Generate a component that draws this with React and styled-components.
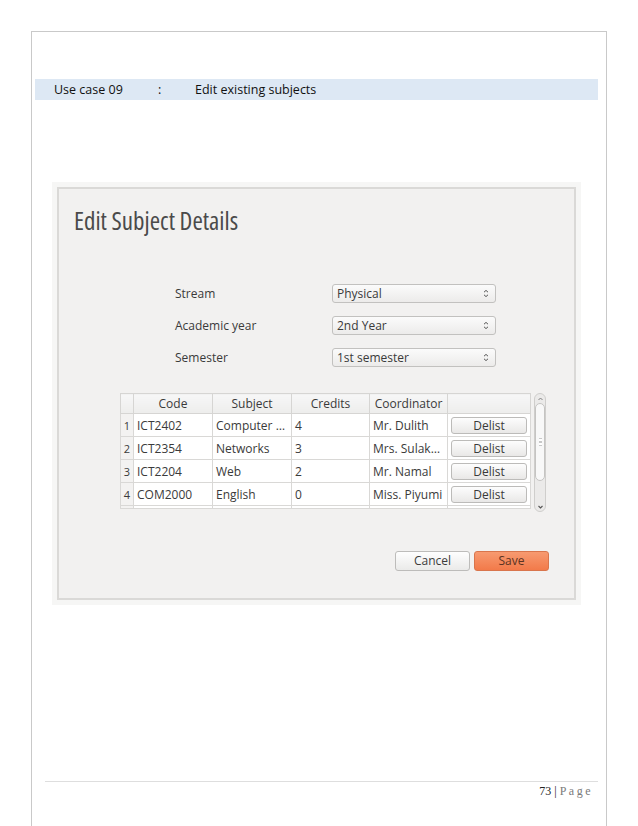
import styled, { createGlobalStyle } from "styled-components";

const GlobalStyle = createGlobalStyle`
  html, body {
    margin: 0;
    padding: 0;
    background: #ffffff;
  }
  body {
    font-family: "Open Sans", "Noto Sans", sans-serif;
  }
`;

const subjects = [
  { no: 1, code: "ICT2402", subject: "Computer Architecture", credits: 4, coordinator: "Mr. Dulith" },
  { no: 2, code: "ICT2354", subject: "Networks", credits: 3, coordinator: "Mrs. Sulakkana" },
  { no: 3, code: "ICT2204", subject: "Web", credits: 2, coordinator: "Mr. Namal" },
  { no: 4, code: "COM2000", subject: "English", credits: 0, coordinator: "Miss. Piyumi" },
];

const fields = [
  { label: "Stream", value: "Physical" },
  { label: "Academic year", value: "2nd Year" },
  { label: "Semester", value: "1st semester" },
];

function Arrows() {
  return (
    <svg width="6" height="9" viewBox="0 0 6 9">
      <path d="M1 3.2 L3 1.4 L5 3.2" fill="none" stroke="#555" strokeWidth="1" />
      <path d="M1 5.8 L3 7.6 L5 5.8" fill="none" stroke="#555" strokeWidth="1" />
    </svg>
  );
}

function App() {
  return (
    <>
      <GlobalStyle />
      <Page>
        <UseCaseBar>
          <UseCaseId>Use case 09</UseCaseId>
          <UseCaseColon>:</UseCaseColon>
          <span>Edit existing subjects</span>
        </UseCaseBar>

        <ShotFrame>
          <Dialog>
            <Title>Edit Subject Details</Title>

            <Form>
              {fields.map((f) => (
                <FormRow key={f.label}>
                  <Label>{f.label}</Label>
                  <Combo>
                    <span>{f.value}</span>
                    <Arrows />
                  </Combo>
                </FormRow>
              ))}
            </Form>

            <TableWrap>
              <Table>
                <colgroup>
                  <col style={{ width: 13 }} />
                  <col style={{ width: 79 }} />
                  <col style={{ width: 79 }} />
                  <col style={{ width: 78 }} />
                  <col style={{ width: 78 }} />
                  <col style={{ width: 83 }} />
                </colgroup>
                <thead>
                  <tr>
                    <HeadCell />
                    <HeadCell>Code</HeadCell>
                    <HeadCell>Subject</HeadCell>
                    <HeadCell>Credits</HeadCell>
                    <HeadCell>Coordinator</HeadCell>
                    <HeadCell />
                  </tr>
                </thead>
                <tbody>
                  {subjects.map((s) => (
                    <tr key={s.no}>
                      <RowNo>{s.no}</RowNo>
                      <Cell>{s.code}</Cell>
                      <Cell>{s.subject}</Cell>
                      <Cell>{s.credits}</Cell>
                      <Cell>{s.coordinator}</Cell>
                      <ButtonCell>
                        <DelistButton>Delist</DelistButton>
                      </ButtonCell>
                    </tr>
                  ))}
                  <PartialRow>
                    <RowNo />
                    <Cell />
                    <Cell />
                    <Cell />
                    <Cell />
                    <Cell />
                  </PartialRow>
                </tbody>
              </Table>
              <ScrollBar>
                <ScrollArrow>
                  <svg width="5" height="4" viewBox="0 0 5 4">
                    <path d="M0.5 3 L2.5 1 L4.5 3" fill="none" stroke="#777" strokeWidth="0.9" />
                  </svg>
                </ScrollArrow>
                <Thumb>
                  <Grip />
                </Thumb>
                <Track />
                <ScrollArrow>
                  <svg width="5" height="4" viewBox="0 0 5 4">
                    <path d="M0.5 1 L2.5 3 L4.5 1" fill="none" stroke="#555" strokeWidth="1.1" />
                  </svg>
                </ScrollArrow>
              </ScrollBar>
            </TableWrap>

            <Actions>
              <ActionButton>Cancel</ActionButton>
              <ActionButton $primary>Save</ActionButton>
            </Actions>
          </Dialog>
        </ShotFrame>

        <Footer>
          <PageNo>
            73 | <PageWord>Page</PageWord>
          </PageNo>
        </Footer>
      </Page>
    </>
  );
}

export default App;

const Page = styled.div`
  box-sizing: border-box;
  margin: 31px 0 0 31px;
  width: 576px;
  height: 795px;
  border: 1px solid #c9c9c9;
  border-bottom: none;
  padding-top: 47px;
  display: flex;
  flex-direction: column;
`;

const UseCaseBar = styled.div`
  margin-left: 3px;
  width: 563px;
  height: 21px;
  background: #dde8f4;
  display: flex;
  align-items: center;
  padding-left: 19px;
  box-sizing: border-box;
  font-size: 12.5px;
  color: #111;
`;

const UseCaseId = styled.span`
  width: 104px;
`;

const UseCaseColon = styled.span`
  width: 37px;
`;

const ShotFrame = styled.div`
  margin: 82px 0 0 20px;
  width: 529px;
  height: 423px;
  box-sizing: border-box;
  padding: 5px;
  background: #f6f6f5;
`;

const Dialog = styled.div`
  box-sizing: border-box;
  height: 100%;
  border: 2px solid #dad9d7;
  background: #f2f1f0;
  padding: 16px 0 0 15px;
  font-family: "Open Sans", "Noto Sans", sans-serif;
  color: #3c3c3c;
  display: flex;
  flex-direction: column;
`;

const Title = styled.h1`
  margin: 0;
  font-family: "Open Sans", "DejaVu Sans Condensed", sans-serif;
  font-stretch: 84%;
  font-weight: 500;
  font-size: 25px;
  line-height: 31px;
  color: #4a4a4a;
`;

const Form = styled.div`
  margin: 48px 0 0 101px;
  display: flex;
  flex-direction: column;
  gap: 14px;
`;

const FormRow = styled.div`
  display: grid;
  grid-template-columns: 157px 164px;
  align-items: center;
  height: 18px;
`;

const Label = styled.span`
  font-size: 12px;
  color: #3a3a3a;
`;

const Combo = styled.div`
  box-sizing: border-box;
  height: 19px;
  border: 1px solid #c2c1bf;
  border-radius: 3px;
  background: linear-gradient(#fbfbfb, #ecebea);
  display: flex;
  align-items: center;
  justify-content: space-between;
  padding: 0 6px 0 4px;
  font-size: 12px;
  color: #3a3a3a;
`;

const TableWrap = styled.div`
  margin: 27px 0 0 46px;
  display: flex;
  gap: 3px;
  height: 119px;
`;

const Table = styled.table`
  border-collapse: collapse;
  table-layout: fixed;
  width: 410px;
  background: #ffffff;
  border: 1px solid #cfcecc;
  font-size: 12px;
  color: #3a3a3a;
  align-self: flex-start;
`;

const HeadCell = styled.th`
  height: 19px;
  padding: 0;
  font-weight: normal;
  text-align: center;
  background: linear-gradient(#f7f7f7, #ededec);
  border: 1px solid #d6d5d3;
`;

const RowNo = styled.td`
  height: 22px;
  padding: 0;
  text-align: center;
  font-size: 11px;
  background: #f3f2f1;
  border: 1px solid #d9d8d6;
`;

const Cell = styled.td`
  height: 22px;
  padding: 0 3px;
  border: 1px solid #d9d8d6;
  white-space: nowrap;
  overflow: hidden;
  text-overflow: ellipsis;
`;

const ButtonCell = styled.td`
  padding: 0 3px;
  border: 1px solid #d9d8d6;
`;

const PartialRow = styled.tr`
  td {
    height: 2px;
    padding: 0;
  }
`;

const DelistButton = styled.div`
  box-sizing: border-box;
  height: 17px;
  border: 1px solid #bcbbb9;
  border-radius: 3px;
  background: linear-gradient(#fdfdfd, #e9e8e7);
  text-align: center;
  line-height: 15px;
  font-size: 12px;
  color: #3a3a3a;
`;

const ScrollBar = styled.div`
  box-sizing: border-box;
  width: 12px;
  height: 119px;
  border: 1px solid #cfcecc;
  border-radius: 6px;
  background: #ebeae9;
  display: flex;
  flex-direction: column;
  align-items: center;
`;

const ScrollArrow = styled.div`
  height: 9px;
  display: flex;
  align-items: center;
  justify-content: center;
`;

const Thumb = styled.div`
  box-sizing: border-box;
  width: 10px;
  height: 78px;
  border: 1px solid #c5c4c2;
  border-radius: 5px;
  background: #f8f8f8;
  display: flex;
  align-items: center;
  justify-content: center;
`;

const Grip = styled.div`
  width: 3px;
  height: 6px;
  border-top: 1px solid #c8c8c8;
  border-bottom: 1px solid #c8c8c8;
  background: linear-gradient(#fff 40%, #c8c8c8 40%, #c8c8c8 60%, #fff 60%);
`;

const Track = styled.div`
  flex: 1;
`;

const Actions = styled.div`
  margin: 39px 0 0 321px;
  display: flex;
  gap: 4px;
`;

const ActionButton = styled.div`
  box-sizing: border-box;
  width: 75px;
  height: 20px;
  border-radius: 3px;
  border: 1px solid ${(p) => (p.$primary ? "#d9754c" : "#bdbcba")};
  background: ${(p) =>
    p.$primary
      ? "linear-gradient(#f79a70, #f27a4a)"
      : "linear-gradient(#fefefe, #eaeae9)"};
  color: ${(p) => (p.$primary ? "#5b3322" : "#3c3c3c")};
  text-align: center;
  line-height: 18px;
  font-size: 12px;
`;

const Footer = styled.div`
  margin: 176px 0 0 13px;
  width: 553px;
  border-top: 1px solid #dedede;
  display: flex;
  justify-content: flex-end;
  padding-top: 2px;
`;

const PageNo = styled.div`
  font-family: "Liberation Serif", "Times New Roman", serif;
  font-size: 12px;
  color: #222;
  padding-right: 5px;
`;

const PageWord = styled.span`
  color: #7a7a7a;
  letter-spacing: 2.5px;
`;
